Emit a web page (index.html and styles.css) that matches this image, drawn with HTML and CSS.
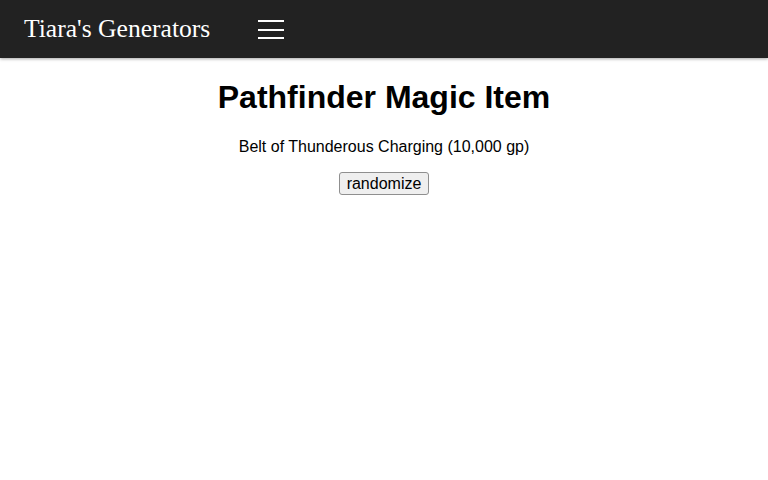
FILE: index.html
```html
<!DOCTYPE html>
<html lang="en">
<head>
<meta charset="utf-8">
<title>Pathfinder Magic Item</title>
<link rel="stylesheet" href="styles.css">
</head>
<body>
<nav class="topbar">
  <a class="brand" href="#">Tiara's Generators</a>
  <button class="menu-toggle" type="button" aria-label="Menu">
    <span></span><span></span><span></span>
  </button>
</nav>
<main class="content">
  <h1 class="title">Pathfinder Magic Item</h1>
  <p class="result">Belt of Thunderous Charging (10,000 gp)</p>
  <button class="randomize" type="button">randomize</button>
</main>
</body>
</html>
```
FILE: styles.css
```css
html, body {
  margin: 0;
  padding: 0;
  background: #fff;
}

body {
  font-family: "Liberation Sans", Arial, sans-serif;
  color: #000;
}

.topbar {
  height: 58px;
  background: #222;
  display: flex;
  align-items: center;
  padding: 0 24px;
  box-sizing: border-box;
  gap: 48px;
  box-shadow: 0 1px 3px rgba(0, 0, 0, 0.35);
}

.brand {
  font-family: "Liberation Serif", "Times New Roman", serif;
  font-size: 25.6px;
  color: #fff;
  text-decoration: none;
  line-height: 1;
}

.menu-toggle {
  background: none;
  border: 0;
  padding: 0;
  width: 26px;
  height: 19px;
  display: flex;
  flex-direction: column;
  justify-content: space-between;
  cursor: pointer;
  margin-top: 1px;
}

.menu-toggle span {
  display: block;
  height: 2px;
  background: #fff;
}

.content {
  text-align: center;
  padding: 0;
}

.title {
  font-size: 32px;
  font-weight: bold;
  margin: 21.44px 0;
}

.result {
  font-size: 16px;
  margin: 16px 0;
}

.randomize {
  font-family: "Liberation Sans", Arial, sans-serif;
  font-size: 16px;
  color: #000;
  background: #efefef;
  border: 1px solid #8f8f8f;
  border-radius: 3px;
  padding: 2px 7px 1px;
}
```
